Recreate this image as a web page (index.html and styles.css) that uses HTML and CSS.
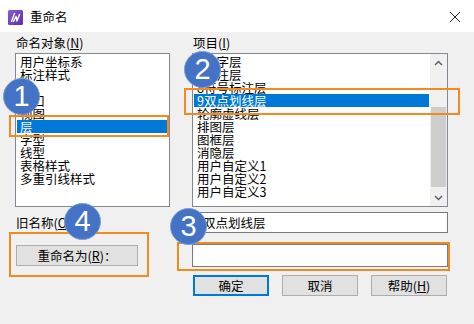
FILE: index.html
```html
<!DOCTYPE html>
<html lang="zh-CN">
<head>
  <meta charset="UTF-8">
  <meta name="viewport" content="width=device-width, initial-scale=1.0">
  <title>重命名</title>
  <link rel="stylesheet" href="styles.css">
</head>
<body>
  <div class="dialog">
    <div class="titlebar">
      <svg class="app-icon" width="15" height="15" viewBox="0 0 15 15">
        <defs>
          <linearGradient id="ig" x1="0" y1="0" x2="1" y2="1">
            <stop offset="0" stop-color="#8a5ad6"/>
            <stop offset="1" stop-color="#5b2ea6"/>
          </linearGradient>
        </defs>
        <rect width="15" height="15" rx="1.5" fill="url(#ig)"/>
        <path d="M3.5 11.5 L6.5 3.5 M5.5 11.5 L8 6.5 L9 11 L11.5 4.5" fill="none" stroke="#fff" stroke-width="1.4" stroke-linecap="round" stroke-linejoin="round"/>
      </svg>
      <span class="title">重命名</span>
      <svg class="close" width="12" height="12" viewBox="0 0 12 12">
        <path d="M1 1 L11 11 M11 1 L1 11" stroke="#222" stroke-width="1"/>
      </svg>
    </div>

    <div class="content">
      <div class="label">命名对象(<u>N</u>)</div>
      <div class="label">项目(<u>I</u>)</div>

      <!-- object types -->
      <div class="listbox">
        <div class="items">
          <div class="item">用户坐标系</div>
          <div class="item">标注样式</div>
          <div class="item">块</div>
          <div class="item">视口</div>
          <div class="item">视图</div>
          <div class="item selected">层</div>
          <div class="item">字型</div>
          <div class="item">线型</div>
          <div class="item">表格样式</div>
          <div class="item">多重引线样式</div>
        </div>
      </div>

      <!-- layer items -->
      <div class="listbox">
        <div class="items">
          <div class="item">6文字层</div>
          <div class="item">7标注层</div>
          <div class="item">8符号标注层</div>
          <div class="item selected">9双点划线层</div>
          <div class="item">轮廓虚线层</div>
          <div class="item">排图层</div>
          <div class="item">图框层</div>
          <div class="item">消隐层</div>
          <div class="item">用户自定义1</div>
          <div class="item">用户自定义2</div>
          <div class="item">用户自定义3</div>
        </div>
        <div class="scrollbar">
          <div class="arrow">
            <svg width="9" height="6" viewBox="0 0 9 6"><path d="M1 5 L4.5 1.5 L8 5" fill="none" stroke="#606060" stroke-width="1.5"/></svg>
          </div>
          <div class="track"><div class="thumb"></div></div>
          <div class="arrow">
            <svg width="9" height="6" viewBox="0 0 9 6"><path d="M1 1 L4.5 4.5 L8 1" fill="none" stroke="#606060" stroke-width="1.5"/></svg>
          </div>
        </div>
      </div>

      <div class="label bottom">旧名称(<u>O</u>)：</div>
      <div class="textbox bottom">9双点划线层</div>

      <div class="bottom"><button class="btn rename">重命名为(<u>R</u>)：</button></div>
      <div class="textbox input bottom"></div>

      <div></div>
      <div class="actions bottom">
        <button class="btn default">确定</button>
        <button class="btn">取消</button>
        <button class="btn">帮助(<u>H</u>)</button>
      </div>
    </div>

    <!-- annotations drawn over the dialog -->
    <div class="mark m1"></div>
    <div class="mark m2"></div>
    <div class="mark m3"></div>
    <div class="mark m4"></div>
    <div class="badge b1">1</div>
    <div class="badge b2">2</div>
    <div class="badge b3">3</div>
    <div class="badge b4">4</div>
  </div>
</body>
</html>
```

FILE: styles.css
```css
body {
  margin: 0;
  padding: 0;
  background-color: #f0f0f0;
  font-family: "Noto Sans CJK SC", "Liberation Sans", sans-serif;
  font-size: 12.5px;
  color: #000;
}
.dialog {
  position: relative;
  width: 474px;
  height: 324px;
  overflow: hidden;
  background-color: #f0f0f0;
}
.titlebar {
  height: 32px;
  background-color: #fff;
  display: flex;
  align-items: center;
  padding-left: 8px;
}
.app-icon {
  margin-top: 2px;
}
.title {
  margin-left: 7px;
  font-size: 12.5px;
  margin-top: 1px;
}
.close {
  margin-left: auto;
  margin-right: 13px;
  margin-top: 2px;
}
.content {
  display: grid;
  grid-template-columns: 155px 256px;
  grid-template-rows: 21px 154px 26px 34px 29px;
  column-gap: 22px;
  padding-left: 15px;
}
.label {
  line-height: 21px;
  padding-left: 1px;
  white-space: nowrap;
}
.bottom {
  align-self: end;
}
.listbox {
  display: flex;
  background-color: #fff;
  border: 1px solid #828790;
  overflow: hidden;
}
.items {
  flex: 1;
  padding-top: 1px;
}
.item {
  height: 13px;
  line-height: 13px;
  margin: 0 1px;
  padding-left: 3px;
  white-space: nowrap;
}
.item.selected {
  background-color: #0078d7;
  color: #fff;
}
.scrollbar {
  width: 17px;
  display: flex;
  flex-direction: column;
  background-color: #f0f0f0;
}
.arrow {
  height: 17px;
  display: flex;
  align-items: center;
  justify-content: center;
}
.track {
  flex: 1;
}
.thumb {
  margin: 36px 1px 0;
  height: 80px;
  background-color: #cdcdcd;
}
.textbox {
  height: 21px;
  box-sizing: border-box;
  background-color: #fff;
  border: 1px solid #7a7a7a;
  line-height: 19px;
  padding-left: 3px;
}
.textbox.input {
  height: 23px;
}
.btn {
  font-family: inherit;
  font-size: 12.5px;
  height: 21px;
  box-sizing: border-box;
  padding: 0;
  background-color: #e1e1e1;
  border: 1px solid #adadad;
  color: #000;
  line-height: 19px;
}
.rename {
  width: 122px;
  margin-left: 1px;
  margin-bottom: 1px;
  display: block;
}
.actions {
  display: flex;
  gap: 13px;
  padding-left: 1px;
}
.actions .btn {
  width: 76px;
}
.btn.default {
  border-color: #0078d7;
  box-shadow: inset 0 0 0 1px #0078d7;
}
.mark {
  position: absolute;
  box-sizing: border-box;
  border: 2px solid #f28a22;
}
.m1 { left: 9px; top: 115px; width: 160px; height: 22px; }
.m2 { left: 184px; top: 88px; width: 276px; height: 27px; }
.m3 { left: 177px; top: 242px; width: 273px; height: 29px; }
.m4 { left: 9px; top: 232px; width: 140px; height: 45px; }
.badge {
  position: absolute;
  width: 37px;
  height: 37px;
  box-sizing: border-box;
  border-radius: 50%;
  background-color: #4472c4;
  border: 1px solid #7b9cd6;
  color: #fff;
  font-family: "Liberation Sans", Arial, sans-serif;
  font-size: 29px;
  line-height: 35px;
  text-align: center;
}
.b1 { left: 3px; top: 78px; }
.b2 { left: 184px; top: 51px; }
.b3 { left: 170px; top: 208px; }
.b4 { left: 64px; top: 203px; }
```
